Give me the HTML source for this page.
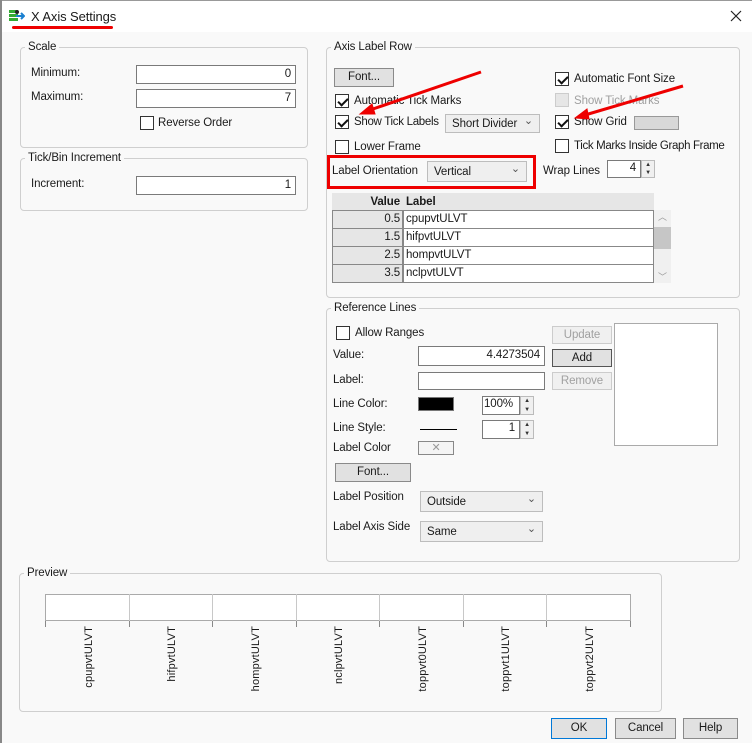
<!DOCTYPE html>
<html><head><meta charset="utf-8"><style>
*{box-sizing:border-box;margin:0;padding:0}
body{width:752px;height:743px;background:#f9f9f9;font-family:"Liberation Sans",sans-serif;font-size:11.5px;letter-spacing:-0.1px;color:#1a1a1a;position:relative;overflow:hidden}
.a{position:absolute}
.t{position:absolute;white-space:nowrap;line-height:14px}
.grp{position:absolute;border:1px solid #cfcfcf;border-radius:4px}
.gl{position:absolute;background:#f9f9f9;padding:0 3px;line-height:14px;top:-8px;left:4px}
.inp{position:absolute;background:#fff;border:1px solid #7a7a7a;text-align:right;padding-right:4px;line-height:16px}
.cb{position:absolute;width:14px;height:14px;border:1px solid #333;background:#fff}
.cb.on::after{content:"";position:absolute;left:4px;top:1px;width:4px;height:8px;border:solid #111;border-width:0 2px 2px 0;transform:rotate(45deg)}
.btn{position:absolute;background:#e1e1e1;border:1px solid #8a8a8a;text-align:center;line-height:17px}
.dd{position:absolute;background:#efefef;border:1px solid #bdbdbd;padding-left:6px;line-height:18px}
.dd::after{content:"⌄";position:absolute;right:6px;top:-3px;font-size:11px;color:#555}
.sp{position:absolute;width:14px;border:1px solid #bbb;background:#f0f0f0}
.sp i{display:block;height:50%;font-style:normal;font-size:6px;text-align:center;line-height:8px;color:#333}
.vl{position:absolute;transform:rotate(-90deg);transform-origin:left top;font-size:11px;letter-spacing:0.2px;white-space:nowrap;text-align:right;width:90px}
</style></head><body>
<div class="a" style="left:0;top:0;width:752px;height:32px;background:#fff;border-top:1px solid #999"></div>
<div class="a" style="left:0;top:0;width:2px;height:743px;background:#888"></div>
<svg class="a" style="left:9px;top:9px" width="16" height="14"><rect x="0" y="1" width="9" height="3" fill="#3a3"/><rect x="0" y="5" width="9" height="3" fill="#3a3"/><rect x="0" y="9" width="9" height="3" fill="#3a3"/><path d="M7 7 L15 7 M12 4 L15 7 L12 10" stroke="#1a7fd0" stroke-width="2" fill="none"/><circle cx="8" cy="3" r="2" fill="#222"/></svg>
<div class="t" style="left:31px;top:10px;font-size:13px">X Axis Settings</div>
<div class="a" style="left:12px;top:26px;width:101px;height:3px;background:#e00;border-radius:2px"></div>
<svg class="a" style="left:730px;top:10px" width="12" height="12"><path d="M1 1 L11 11 M11 1 L1 11" stroke="#222" stroke-width="1.2"/></svg>

<!-- Scale -->
<div class="grp" style="left:20px;top:47px;width:288px;height:101px"><span class="gl">Scale</span></div>
<div class="t" style="left:31px;top:66px">Minimum:</div>
<div class="inp" style="left:136px;top:65px;width:160px;height:19px">0</div>
<div class="t" style="left:31px;top:90px">Maximum:</div>
<div class="inp" style="left:136px;top:89px;width:160px;height:19px">7</div>
<div class="cb" style="left:140px;top:116px"></div>
<div class="t" style="left:158px;top:116px">Reverse Order</div>

<div class="grp" style="left:20px;top:158px;width:288px;height:53px"><span class="gl">Tick/Bin Increment</span></div>
<div class="t" style="left:31px;top:177px">Increment:</div>
<div class="inp" style="left:136px;top:176px;width:160px;height:19px">1</div>

<!-- Axis Label Row -->
<div class="grp" style="left:326px;top:47px;width:414px;height:251px"><span class="gl">Axis Label Row</span></div>
<div class="btn" style="left:334px;top:68px;width:60px;height:19px">Font...</div>
<div class="cb on" style="left:335px;top:94px"></div><div class="t" style="left:354px;top:94px">Automatic Tick Marks</div>
<div class="cb on" style="left:335px;top:115px"></div><div class="t" style="left:354px;top:115px;letter-spacing:-0.3px">Show Tick Labels</div>
<div class="dd" style="left:445px;top:114px;width:95px;height:19px">Short Divider</div>
<div class="cb" style="left:335px;top:140px"></div><div class="t" style="left:354px;top:140px">Lower Frame</div>
<div class="cb on" style="left:555px;top:72px"></div><div class="t" style="left:574px;top:72px">Automatic Font Size</div>
<div class="cb" style="left:555px;top:93px;background:#e6e6e6;border-color:#ccc"></div><div class="t" style="left:574px;top:94px;color:#a0a0a0">Show Tick Marks</div>
<div class="cb on" style="left:555px;top:115px"></div><div class="t" style="left:574px;top:115px">Show Grid</div>
<div class="a" style="left:634px;top:116px;width:45px;height:14px;background:#d8d8d8;border:1px solid #999"></div>
<div class="cb" style="left:555px;top:139px"></div><div class="t" style="left:574px;top:139px;letter-spacing:-0.35px">Tick Marks Inside Graph Frame</div>
<div class="a" style="left:327px;top:155px;width:209px;height:34px;border:3px solid #e00"></div>
<div class="t" style="left:332px;top:164px">Label Orientation</div>
<div class="dd" style="left:427px;top:161px;width:100px;height:21px;line-height:20px">Vertical</div>
<div class="t" style="left:543px;top:164px">Wrap Lines</div>
<div class="inp" style="left:607px;top:160px;width:34px;height:18px;line-height:14px">4</div>
<div class="sp" style="left:641px;top:160px;height:18px"><i>▲</i><i>▼</i></div>
<!-- table -->
<div class="a" style="left:332px;top:193px;width:322px;height:17px;background:#e6e6e6"></div>
<div class="t" style="left:332px;top:195px;width:68px;text-align:right;font-weight:bold">Value</div>
<div class="t" style="left:406px;top:195px;font-weight:bold">Label</div>
<div class="a" style="left:332px;top:210px;width:71px;height:73px;background:#e6e6e6;border:1px solid #888"></div>
<div class="a" style="left:403px;top:210px;width:251px;height:73px;background:#fff;border:1px solid #888"></div>
<div class="a" style="left:332px;top:228px;width:322px;height:1px;background:#888"></div>
<div class="a" style="left:332px;top:246px;width:322px;height:1px;background:#888"></div>
<div class="a" style="left:332px;top:264px;width:322px;height:1px;background:#888"></div>
<div class="t" style="left:332px;top:212px;width:68px;text-align:right">0.5</div><div class="t" style="left:406px;top:212px">cpupvtULVT</div>
<div class="t" style="left:332px;top:230px;width:68px;text-align:right">1.5</div><div class="t" style="left:406px;top:230px">hifpvtULVT</div>
<div class="t" style="left:332px;top:248px;width:68px;text-align:right">2.5</div><div class="t" style="left:406px;top:248px">hompvtULVT</div>
<div class="t" style="left:332px;top:266px;width:68px;text-align:right">3.5</div><div class="t" style="left:406px;top:266px">nclpvtULVT</div>
<div class="a" style="left:654px;top:210px;width:17px;height:73px;background:#f0f0f0"></div>
<div class="a" style="left:654px;top:227px;width:17px;height:22px;background:#c6c6c6"></div>
<div class="t" style="left:658px;top:210px;font-size:9px;color:#999">︿</div>
<div class="t" style="left:658px;top:270px;font-size:9px;color:#999">﹀</div>

<!-- Reference lines -->
<div class="grp" style="left:326px;top:308px;width:414px;height:254px"><span class="gl">Reference Lines</span></div>
<div class="cb" style="left:336px;top:326px"></div><div class="t" style="left:355px;top:326px">Allow Ranges</div>
<div class="t" style="left:333px;top:348px">Value:</div>
<div class="inp" style="left:418px;top:346px;width:127px;height:20px">4.4273504</div>
<div class="t" style="left:333px;top:373px">Label:</div>
<div class="inp" style="left:418px;top:372px;width:127px;height:18px"></div>
<div class="btn" style="left:552px;top:326px;width:60px;height:18px;background:#f0f0f0;border-color:#ccc;color:#a0a0a0">Update</div>
<div class="btn" style="left:552px;top:349px;width:60px;height:18px;border-color:#555">Add</div>
<div class="btn" style="left:552px;top:372px;width:60px;height:18px;background:#f0f0f0;border-color:#ccc;color:#a0a0a0">Remove</div>
<div class="a" style="left:614px;top:323px;width:104px;height:123px;background:#fff;border:1px solid #aaa"></div>
<div class="t" style="left:333px;top:397px">Line Color:</div>
<div class="a" style="left:418px;top:397px;width:36px;height:14px;background:#000;border:1px solid #777"></div>
<div class="inp" style="left:482px;top:396px;width:38px;height:19px;line-height:14px;text-align:left;padding-left:1px">100%</div>
<div class="sp" style="left:520px;top:396px;height:19px"><i>▲</i><i>▼</i></div>
<div class="t" style="left:333px;top:421px">Line Style:</div>
<div class="a" style="left:420px;top:429px;width:37px;height:1px;background:#000"></div>
<div class="inp" style="left:482px;top:420px;width:38px;height:19px;line-height:14px">1</div>
<div class="sp" style="left:520px;top:420px;height:19px"><i>▲</i><i>▼</i></div>
<div class="t" style="left:333px;top:441px">Label Color</div>
<div class="a" style="left:418px;top:441px;width:36px;height:14px;background:#f4f4f4;border:1px solid #888;text-align:center;font-size:11px;line-height:12px;color:#999">✕</div>
<div class="btn" style="left:335px;top:463px;width:76px;height:19px">Font...</div>
<div class="t" style="left:333px;top:490px">Label Position</div>
<div class="dd" style="left:420px;top:491px;width:123px;height:21px;line-height:20px">Outside</div>
<div class="t" style="left:333px;top:520px">Label Axis Side</div>
<div class="dd" style="left:420px;top:521px;width:123px;height:21px;line-height:20px">Same</div>

<!-- Preview -->
<div class="grp" style="left:19px;top:573px;width:643px;height:139px"><span class="gl">Preview</span></div>
<div class="a" style="left:45px;top:594px;width:586px;height:27px;background:#fff;border:1px solid #aaa"></div>
<svg class="a" style="left:45px;top:594px" width="590" height="34"><g stroke="#c8c8c8"><line x1="84.5" y1="0" x2="84.5" y2="27"/><line x1="167.5" y1="0" x2="167.5" y2="27"/><line x1="251.5" y1="0" x2="251.5" y2="27"/><line x1="334.5" y1="0" x2="334.5" y2="27"/><line x1="418.5" y1="0" x2="418.5" y2="27"/><line x1="501.5" y1="0" x2="501.5" y2="27"/></g><g stroke="#888"><line x1="0.5" y1="27" x2="0.5" y2="33"/><line x1="84.5" y1="27" x2="84.5" y2="33"/><line x1="167.5" y1="27" x2="167.5" y2="33"/><line x1="251.5" y1="27" x2="251.5" y2="33"/><line x1="334.5" y1="27" x2="334.5" y2="33"/><line x1="418.5" y1="27" x2="418.5" y2="33"/><line x1="501.5" y1="27" x2="501.5" y2="33"/><line x1="585.5" y1="27" x2="585.5" y2="33"/></g></svg>
<div class="vl" style="left:83px;top:716px">cpupvtULVT</div>
<div class="vl" style="left:166px;top:716px">hifpvtULVT</div>
<div class="vl" style="left:250px;top:716px">hompvtULVT</div>
<div class="vl" style="left:333px;top:716px">nclpvtULVT</div>
<div class="vl" style="left:417px;top:716px">toppvt0ULVT</div>
<div class="vl" style="left:500px;top:716px">toppvt1ULVT</div>
<div class="vl" style="left:584px;top:716px">toppvt2ULVT</div>

<div class="btn" style="left:551px;top:718px;width:56px;height:21px;line-height:19px;border:1px solid #0078d7">OK</div>
<div class="btn" style="left:615px;top:718px;width:61px;height:21px;line-height:19px">Cancel</div>
<div class="btn" style="left:683px;top:718px;width:55px;height:21px;line-height:19px">Help</div>

<!-- red arrows -->
<svg class="a" style="left:0;top:0" width="752" height="743"><g stroke="#e00" stroke-width="3" fill="#e00"><line x1="481" y1="72" x2="370" y2="110"/><polygon points="360,114 372,104 375,114" stroke-width="1"/><line x1="683" y1="86" x2="585" y2="115"/><polygon points="575,118 587,109 589,119" stroke-width="1"/></g></svg>
</body></html>
